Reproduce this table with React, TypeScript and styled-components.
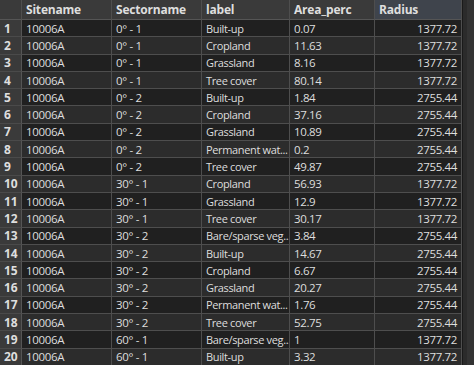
import React from 'react'
import styled, { createGlobalStyle } from 'styled-components';

const ROW_H = 17.3;
const COLS = '22px 90px 90px 88px 85px 87px';

const GlobalStyle = createGlobalStyle`
  html, body {
    margin: 0;
    padding: 0;
    background: #2a2a2a;
    overflow: hidden;
  }
`;

const Frame = styled.div`
  display: flex;
  width: 474px;
  height: 365px;
  overflow: hidden;
  font-family: 'Open Sans', 'Noto Sans', sans-serif;
  font-size: 11.5px;
  letter-spacing: -0.35px;
  color: #dedede;
`;

const Table = styled.div`
  display: grid;
  grid-template-columns: ${COLS};
  grid-auto-rows: ${ROW_H}px;
  grid-template-rows: 20px;
  align-content: start;
  background: #1e1e1e;
`;

const HeadCell = styled.div<{ $hot?: boolean }>`
  display: flex;
  align-items: center;
  padding-left: 4px;
  font-weight: 700;
  font-size: 12px;
  letter-spacing: -0.2px;
  background: ${p => (p.$hot ? '#3f444c' : '#3a3a3a')};
  border-right: 1px solid #4e4e4e;
  border-bottom: 1px solid #555;
  box-sizing: border-box;
  white-space: nowrap;
  overflow: hidden;
`;

const NumCell = styled.div`
  display: flex;
  align-items: center;
  padding-left: 4px;
  font-weight: 700;
  font-size: 12px;
  letter-spacing: 0;
  background: #3a3a3a;
  border-right: 1px solid #555;
  border-bottom: 1px solid #4a4a4a;
  box-sizing: border-box;
`;

const Cell = styled.div<{ $odd: boolean; $right?: boolean; $tight?: boolean }>`
  display: flex;
  align-items: center;
  justify-content: ${p => (p.$right ? 'flex-end' : 'flex-start')};
  padding: ${p => (p.$tight ? '0 1px 0 4px' : '0 4px')};
  font-size: ${p => (p.$tight ? '11px' : '11.5px')};
  letter-spacing: ${p => (p.$tight ? '-0.35px' : '-0.35px')};
  background: ${p => (p.$odd ? '#202020' : '#2c2c2c')};
  border-right: 1px solid #4e4e4e;
  border-bottom: 1px solid #4e4e4e;
  box-sizing: border-box;
  white-space: nowrap;
  overflow: hidden;
`;

const Scrollbar = styled.div`
  width: 12px;
  background: #2b2b2b;
  border-left: 1px solid #1a1a1a;
  display: flex;
  justify-content: flex-end;
`;

const Track = styled.div`
  width: 7px;
  background: #333;
`;

type Row = [string, string, string, string, string];

const rows: Row[] = [
  ['10006A', '0° - 1', 'Built-up', '0.07', '1377.72'],
  ['10006A', '0° - 1', 'Cropland', '11.63', '1377.72'],
  ['10006A', '0° - 1', 'Grassland', '8.16', '1377.72'],
  ['10006A', '0° - 1', 'Tree cover', '80.14', '1377.72'],
  ['10006A', '0° - 2', 'Built-up', '1.84', '2755.44'],
  ['10006A', '0° - 2', 'Cropland', '37.16', '2755.44'],
  ['10006A', '0° - 2', 'Grassland', '10.89', '2755.44'],
  ['10006A', '0° - 2', 'Permanent wat...', '0.2', '2755.44'],
  ['10006A', '0° - 2', 'Tree cover', '49.87', '2755.44'],
  ['10006A', '30° - 1', 'Cropland', '56.93', '1377.72'],
  ['10006A', '30° - 1', 'Grassland', '12.9', '1377.72'],
  ['10006A', '30° - 1', 'Tree cover', '30.17', '1377.72'],
  ['10006A', '30° - 2', 'Bare/sparse veg...', '3.84', '2755.44'],
  ['10006A', '30° - 2', 'Built-up', '14.67', '2755.44'],
  ['10006A', '30° - 2', 'Cropland', '6.67', '2755.44'],
  ['10006A', '30° - 2', 'Grassland', '20.27', '2755.44'],
  ['10006A', '30° - 2', 'Permanent wat...', '1.76', '2755.44'],
  ['10006A', '30° - 2', 'Tree cover', '52.75', '2755.44'],
  ['10006A', '60° - 1', 'Bare/sparse veg...', '1', '1377.72'],
  ['10006A', '60° - 1', 'Built-up', '3.32', '1377.72'],
];

function App() {
  return (
    <>
      <GlobalStyle />
      <Frame>
        <Table>
          <HeadCell />
          <HeadCell>Sitename</HeadCell>
          <HeadCell>Sectorname</HeadCell>
          <HeadCell>label</HeadCell>
          <HeadCell>Area_perc</HeadCell>
          <HeadCell $hot>Radius</HeadCell>
          {rows.map((r, i) => {
            const odd = i % 2 === 0;
            return (
              <React.Fragment key={i}>
                <NumCell>{i + 1}</NumCell>
                <Cell $odd={odd}>{r[0]}</Cell>
                <Cell $odd={odd}>{r[1]}</Cell>
                <Cell $odd={odd} $tight>{r[2]}</Cell>
                <Cell $odd={odd}>{r[3]}</Cell>
                <Cell $odd={odd} $right>{r[4]}</Cell>
              </React.Fragment>
            );
          })}
        </Table>
        <Scrollbar>
          <Track />
        </Scrollbar>
      </Frame>
    </>
  );
}

export default App
